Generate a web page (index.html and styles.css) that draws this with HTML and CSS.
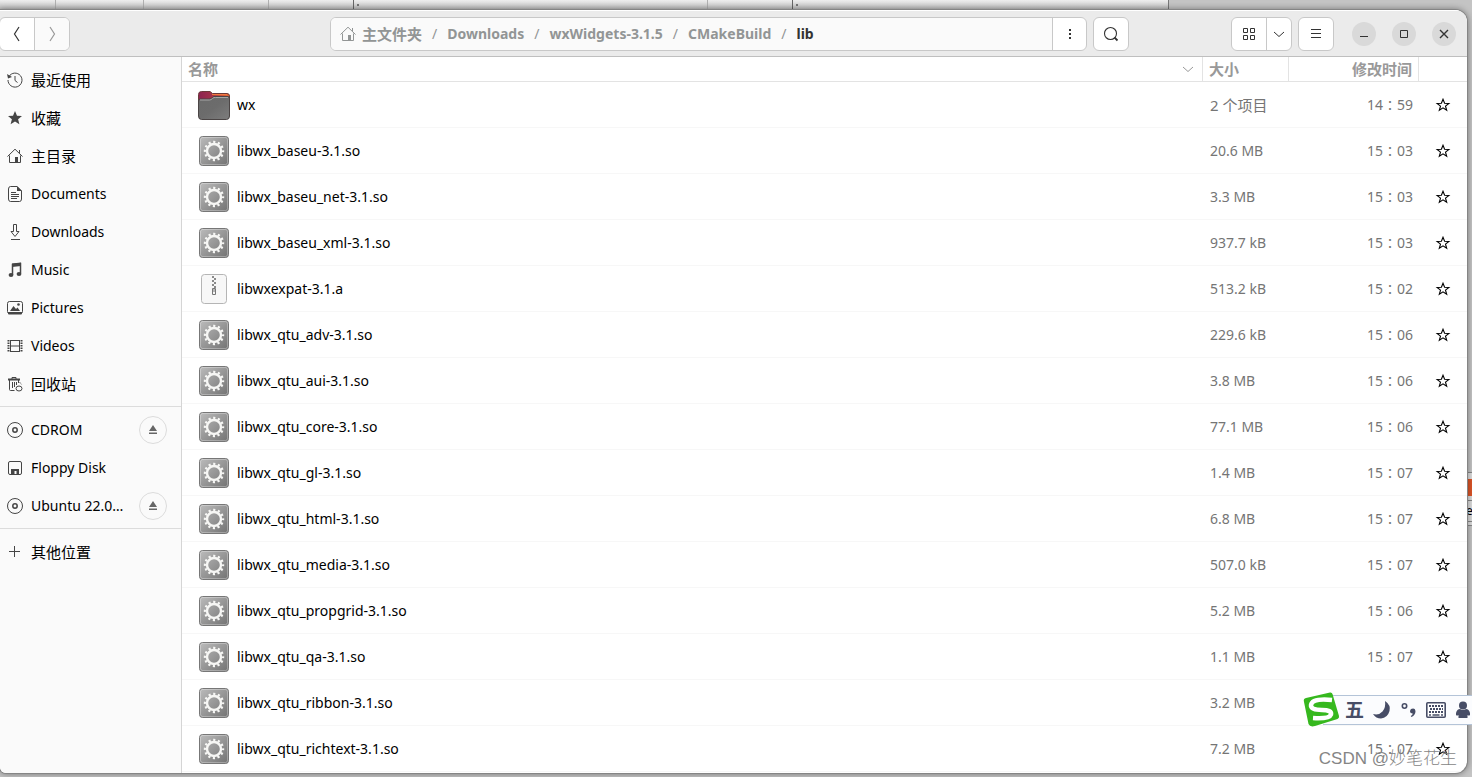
FILE: index.html
```
<!DOCTYPE html>
<html lang="zh-CN">
<head>
    <meta charset="UTF-8">
    <meta name="viewport" content="width=device-width, initial-scale=1.0">
    <title>lib</title>
    <link rel="stylesheet" href="styles.css">
</head>
<body>
    <svg class="sprite" aria-hidden="true">
        <defs>
            <linearGradient id="metal" x1="0" y1="0" x2="1" y2="1">
                <stop offset="0" stop-color="#bcbcbc"/>
                <stop offset="1" stop-color="#727272"/>
            </linearGradient>
            <linearGradient id="folderBack" x1="0" y1="0" x2="1" y2="0">
                <stop offset="0" stop-color="#8c2350"/>
                <stop offset="0.4" stop-color="#a0304a"/>
                <stop offset="1" stop-color="#ea6a31"/>
            </linearGradient>
            <linearGradient id="folderFront" x1="0" y1="0" x2="1" y2="1">
                <stop offset="0" stop-color="#6a6a6a"/>
                <stop offset="0.5" stop-color="#6c6c6c"/>
                <stop offset="1" stop-color="#7d7d7d"/>
            </linearGradient>
        </defs>
        <symbol id="gear" viewBox="0 0 32 32">
            <rect x="1.5" y="1.5" width="29" height="29" rx="3" fill="url(#metal)" stroke="#777"/>
            <rect x="2.5" y="2.5" width="27" height="27" rx="2" fill="none" stroke="#fff" stroke-opacity="0.3"/>
            <circle cx="16" cy="16" r="7" fill="none" stroke="#f6f6f4" stroke-width="2.4"/>
            <circle cx="16" cy="16" r="9" fill="none" stroke="#f6f6f4" stroke-width="2.4" stroke-dasharray="2.2 2.512" stroke-dashoffset="1.1"/>
        </symbol>
        <symbol id="folder" viewBox="0 0 32 32">
            <path d="M.5 26V5.500Q.5 2.500 3.500 2.500H12l2.500 2H29q2.500 0 2.500 2.500v20z" fill="url(#folderBack)" stroke="#6b3a3a"/>
            <path d="M14 5.500h15" stroke="#f07a40"/>
            <path d="M.5 12q0-2 2-2H11q2 0 3.500-1.500T17 7.500h13q1.500 0 1.500 2V27q0 3.500-3 3.500H3.500Q.5 30.500.5 27z" fill="url(#folderFront)" stroke="#4b4545"/>
            <path d="M2 11h9.500q1.500 0 3-1.500t3-1H30" fill="none" stroke="#a5a5a5"/>
        </symbol>
        <symbol id="archive" viewBox="0 0 32 32">
            <rect x="3.500" y="1.500" width="25" height="29" rx="3" fill="#f7f7f7" stroke="#b5b5b5"/>
            <path d="M14 3h2v2h-2zM16 5h2v2h-2zM14 7h2v2h-2zM16 9h2v2h-2zM14 11h2v2h-2zM16 13h2v2h-2z" fill="#8a8a8a"/>
            <path d="M14.500 15.500h3v6h-3zM16 16v3" fill="none" stroke="#777"/>
        </symbol>
        <symbol id="star" viewBox="0 0 16 16">
            <path d="M8 2.200l1.600 4 4.300.2-3.400 2.700 1.200 4.200L8 10.900l-3.700 2.400 1.200-4.200L2.100 6.400l4.300-.2z" fill="none" stroke="#000" stroke-width="1.100"/>
        </symbol>
        <symbol id="star-full" viewBox="0 0 16 16">
            <path d="M8 1l2 4.800 5 .3-3.900 3.200 1.300 5L8 11.500l-4.400 2.800 1.300-5L1 6.100l5-.3z" fill="#454545"/>
        </symbol>
        <symbol id="recent" viewBox="0 0 16 16">
            <path d="M2 4.500A7 7 0 1 1 1 8M8 4v4.500l2.500 2" fill="none" stroke="currentColor"/>
            <path d="M0 2l1 4.500L5 5z" fill="currentColor"/>
        </symbol>
        <symbol id="home" viewBox="0 0 16 16">
            <path d="M.5 8.500L8 1.200l7.500 7.300M2.500 7.500v7h11v-7M12.500 2v3" fill="none" stroke="currentColor"/>
            <path d="M8 9h3v5.500H8z" fill="currentColor"/>
        </symbol>
        <symbol id="document" viewBox="0 0 16 16">
            <path d="M1.500 3q0-2.500 2-2.500H10L14.500 5v8q0 2.500-2 2.500h-9q-2 0-2-2.500zM4 6.500h5M4 8.500h8M4 10.500h8M4 12.500h6" fill="none" stroke="currentColor"/>
            <path d="M10 0v5h5z" fill="currentColor"/>
        </symbol>
        <symbol id="download" viewBox="0 0 16 16">
            <path d="M6.500.5h3v7H12l-4 5-4-5h2.500zM4 15.500h9" fill="none" stroke="currentColor"/>
        </symbol>
        <symbol id="music" viewBox="0 0 16 16">
            <path d="M5.500 13V2.500L13.500 1.500V11.500" fill="none" stroke="currentColor" stroke-width="1.500"/>
            <path d="M5 1.500L14 .5V4L5 5z" fill="currentColor"/>
            <ellipse cx="4" cy="13" rx="2.400" ry="2" fill="currentColor"/>
            <ellipse cx="12" cy="12" rx="2.400" ry="2" fill="currentColor"/>
        </symbol>
        <symbol id="picture" viewBox="0 0 16 16">
            <rect x=".5" y="1.500" width="15" height="12" rx="2" fill="none" stroke="currentColor"/>
            <path d="M1 12h14v1.500q0 1-1 1H2q-1 0-1-1zM3 11l3.500-5L9 9l1.500-1.500L13 11z" fill="currentColor"/>
            <circle cx="11.500" cy="4.500" r="1.300" fill="currentColor"/>
        </symbol>
        <symbol id="video" viewBox="0 0 16 16">
            <path d="M3.500 2v12M12.500 2v12M3.500 2.500h9M3.500 8h9M3.500 13.500h9" fill="none" stroke="currentColor"/>
            <path d="M1.500 2v12.500M14.500 2v12.500" fill="none" stroke="currentColor" stroke-width="2" stroke-dasharray="1.500 1"/>
        </symbol>
        <symbol id="trash" viewBox="0 0 16 16">
            <path d="M5 3V1.500h4V3M2.500 4v9.500q0 1 1 1h4M11.500 4v3M5.500 6v6M7.500 6v5M9.500 6v3" fill="none" stroke="currentColor"/>
            <path d="M1 2.500h12v2H1z" fill="currentColor"/>
            <path d="M12.500 6l2.500 3" fill="none" stroke="currentColor" stroke-dasharray="1 1"/>
            <ellipse cx="12" cy="12.500" rx="3" ry="2.500" fill="#fafafa" stroke="currentColor"/>
        </symbol>
        <symbol id="disc" viewBox="0 0 16 16">
            <circle cx="8" cy="8" r="7.500" fill="none" stroke="currentColor"/>
            <circle cx="8" cy="8" r="2.200" fill="none" stroke="currentColor" stroke-width="1.500"/>
        </symbol>
        <symbol id="floppy" viewBox="0 0 16 16">
            <rect x="1.500" y="1.500" width="13" height="13" rx="1.500" fill="none" stroke="currentColor"/>
            <path d="M4 9h8v6H9.500v-4h-2v4H4z" fill="currentColor"/>
        </symbol>
        <symbol id="plus" viewBox="0 0 16 16">
            <path d="M2 7.500h11M7.500 2v11" fill="none" stroke="currentColor"/>
        </symbol>
        <symbol id="eject" viewBox="0 0 16 16">
            <path d="M8 3l4 6H4zM4 10.500h8V12H4z" fill="#666"/>
        </symbol>
        <symbol id="down" viewBox="0 0 16 16">
            <path d="M3 6l5 4.500L13 6" fill="none" stroke="currentColor"/>
        </symbol>
    </svg>

    <div class="desktop" aria-hidden="true">
        <div class="behind-bar">
            <i></i><i></i><i></i><i class="edge"></i><i></i><i class="edge"></i>
        </div>
        <div class="behind-side"><b></b><span>e</span></div>
    </div>

    <div class="window">
        <header class="toolbar">
            <div class="group nav">
                <button aria-label="后退"><svg width="16" height="16" viewBox="0 0 16 16"><path d="M10 1L5.500 8 10 15" fill="none" stroke="currentColor" stroke-width="1.200"/></svg></button>
                <button aria-label="前进" disabled><svg width="16" height="16" viewBox="0 0 16 16"><path d="M6 1l4.500 7L6 15" fill="none" stroke="currentColor" stroke-width="1.200"/></svg></button>
            </div>
            <div class="group path">
                <nav class="crumbs">
                    <svg class="icon"><use href="#home"/></svg>
                    <a href="#" class="zh">主文件夹</a><span>/</span>
                    <a href="#">Downloads</a><span>/</span>
                    <a href="#">wxWidgets-3.1.5</a><span>/</span>
                    <a href="#">CMakeBuild</a><span>/</span>
                    <a href="#" class="current">lib</a>
                </nav>
                <button aria-label="菜单"><svg width="16" height="16" viewBox="0 0 16 16"><path d="M7 3h2v2H7zM7 7h2v2H7zM7 11h2v2H7z" fill="currentColor"/></svg></button>
            </div>
            <div class="group">
                <button aria-label="搜索"><svg width="16" height="16" viewBox="0 0 16 16"><circle cx="7.500" cy="7.500" r="6" fill="none" stroke="currentColor" stroke-width="1.100"/><path d="M11.500 11.500l3 3" stroke="currentColor" stroke-width="1.800"/></svg></button>
            </div>
            <div class="group view">
                <button aria-label="图标视图"><svg width="16" height="16" viewBox="0 0 16 16"><path d="M2.500 2.500h4v4h-4zM9.500 2.500h4v4h-4zM2.500 9.500h4v4h-4zM9.500 9.500h4v4h-4z" fill="none" stroke="currentColor"/></svg></button>
                <button class="narrow" aria-label="视图选项"><svg class="icon"><use href="#down"/></svg></button>
            </div>
            <div class="group">
                <button aria-label="主菜单"><svg width="16" height="16" viewBox="0 0 16 16"><path d="M3 3.500h10M3 7.500h10M3 11.500h10" stroke="currentColor"/></svg></button>
            </div>
            <div class="controls">
                <button aria-label="最小化"><svg width="16" height="16" viewBox="0 0 16 16"><path d="M4 10.500h8" stroke="currentColor"/></svg></button>
                <button aria-label="最大化"><svg width="16" height="16" viewBox="0 0 16 16"><path d="M4.500 4.500h7v7h-7z" fill="none" stroke="currentColor"/></svg></button>
                <button aria-label="关闭"><svg width="16" height="16" viewBox="0 0 16 16"><path d="M4 4l8 8M12 4l-8 8" stroke="currentColor" stroke-width="1.400"/></svg></button>
            </div>
        </header>

        <div class="main">
            <aside class="sidebar">
                <ul>
                    <li><a href="#" class="zh"><svg class="icon"><use href="#recent"/></svg>最近使用</a></li>
                    <li><a href="#" class="zh"><svg class="icon"><use href="#star-full"/></svg>收藏</a></li>
                    <li><a href="#" class="zh"><svg class="icon"><use href="#home"/></svg>主目录</a></li>
                    <li><a href="#"><svg class="icon"><use href="#document"/></svg>Documents</a></li>
                    <li><a href="#"><svg class="icon"><use href="#download"/></svg>Downloads</a></li>
                    <li><a href="#"><svg class="icon"><use href="#music"/></svg>Music</a></li>
                    <li><a href="#"><svg class="icon"><use href="#picture"/></svg>Pictures</a></li>
                    <li><a href="#"><svg class="icon"><use href="#video"/></svg>Videos</a></li>
                    <li><a href="#" class="zh"><svg class="icon"><use href="#trash"/></svg>回收站</a></li>
                </ul>
                <ul>
                    <li><a href="#"><svg class="icon"><use href="#disc"/></svg>CDROM</a><button class="eject" aria-label="弹出"><svg class="icon"><use href="#eject"/></svg></button></li>
                    <li><a href="#"><svg class="icon"><use href="#floppy"/></svg>Floppy Disk</a></li>
                    <li><a href="#"><svg class="icon"><use href="#disc"/></svg>Ubuntu 22.0…</a><button class="eject" aria-label="弹出"><svg class="icon"><use href="#eject"/></svg></button></li>
                </ul>
                <ul>
                    <li><a href="#" class="zh"><svg class="icon"><use href="#plus"/></svg>其他位置</a></li>
                </ul>
            </aside>

            <table class="files">
                <thead>
                    <tr>
                        <th class="name"><div>名称<svg class="icon"><use href="#down"/></svg></div></th>
                        <th class="size">大小</th>
                        <th class="time">修改时间</th>
                        <th class="fav"></th>
                    </tr>
                </thead>
                <tbody>
                    <tr><td><div><svg class="mime"><use href="#folder"/></svg>wx</div></td><td class="zh">2 个项目</td><td>14∶59</td><td><svg class="icon"><use href="#star"/></svg></td></tr>
                    <tr><td><div><svg class="mime"><use href="#gear"/></svg>libwx_baseu-3.1.so</div></td><td>20.6 MB</td><td>15∶03</td><td><svg class="icon"><use href="#star"/></svg></td></tr>
                    <tr><td><div><svg class="mime"><use href="#gear"/></svg>libwx_baseu_net-3.1.so</div></td><td>3.3 MB</td><td>15∶03</td><td><svg class="icon"><use href="#star"/></svg></td></tr>
                    <tr><td><div><svg class="mime"><use href="#gear"/></svg>libwx_baseu_xml-3.1.so</div></td><td>937.7 kB</td><td>15∶03</td><td><svg class="icon"><use href="#star"/></svg></td></tr>
                    <tr><td><div><svg class="mime"><use href="#archive"/></svg>libwxexpat-3.1.a</div></td><td>513.2 kB</td><td>15∶02</td><td><svg class="icon"><use href="#star"/></svg></td></tr>
                    <tr><td><div><svg class="mime"><use href="#gear"/></svg>libwx_qtu_adv-3.1.so</div></td><td>229.6 kB</td><td>15∶06</td><td><svg class="icon"><use href="#star"/></svg></td></tr>
                    <tr><td><div><svg class="mime"><use href="#gear"/></svg>libwx_qtu_aui-3.1.so</div></td><td>3.8 MB</td><td>15∶06</td><td><svg class="icon"><use href="#star"/></svg></td></tr>
                    <tr><td><div><svg class="mime"><use href="#gear"/></svg>libwx_qtu_core-3.1.so</div></td><td>77.1 MB</td><td>15∶06</td><td><svg class="icon"><use href="#star"/></svg></td></tr>
                    <tr><td><div><svg class="mime"><use href="#gear"/></svg>libwx_qtu_gl-3.1.so</div></td><td>1.4 MB</td><td>15∶07</td><td><svg class="icon"><use href="#star"/></svg></td></tr>
                    <tr><td><div><svg class="mime"><use href="#gear"/></svg>libwx_qtu_html-3.1.so</div></td><td>6.8 MB</td><td>15∶07</td><td><svg class="icon"><use href="#star"/></svg></td></tr>
                    <tr><td><div><svg class="mime"><use href="#gear"/></svg>libwx_qtu_media-3.1.so</div></td><td>507.0 kB</td><td>15∶07</td><td><svg class="icon"><use href="#star"/></svg></td></tr>
                    <tr><td><div><svg class="mime"><use href="#gear"/></svg>libwx_qtu_propgrid-3.1.so</div></td><td>5.2 MB</td><td>15∶06</td><td><svg class="icon"><use href="#star"/></svg></td></tr>
                    <tr><td><div><svg class="mime"><use href="#gear"/></svg>libwx_qtu_qa-3.1.so</div></td><td>1.1 MB</td><td>15∶07</td><td><svg class="icon"><use href="#star"/></svg></td></tr>
                    <tr><td><div><svg class="mime"><use href="#gear"/></svg>libwx_qtu_ribbon-3.1.so</div></td><td>3.2 MB</td><td>15∶07</td><td><svg class="icon"><use href="#star"/></svg></td></tr>
                    <tr><td><div><svg class="mime"><use href="#gear"/></svg>libwx_qtu_richtext-3.1.so</div></td><td>7.2 MB</td><td>15∶07</td><td><svg class="icon"><use href="#star"/></svg></td></tr>
                </tbody>
            </table>
        </div>
    </div>

    <!-- input method bar, hangs off the right edge of the screen -->
    <div class="ime">
        <svg class="ime-logo" width="38" height="36" viewBox="0 0 38 36">
            <path d="M3 6L27 .5q2-.3 2.500 1.500L36 24q.5 2-1.500 3L12 34q-5 1.500-6.500-2L.8 9Q.5 6.500 3 6z" fill="#36b81e"/>
            <path d="M29 8Q9 6 8 13q-.5 5 11 5 10 0 9 4.500Q26.500 27 10 26" fill="none" stroke="#fff" stroke-width="4.500"/>
        </svg>
        <span class="ime-mode">五</span>
        <svg width="20" height="20" viewBox="0 0 20 20"><path d="M13 1q6 4 4.500 10Q15.500 18 9 18.500 4 18.500 1 14q6 1.500 9.500-2.500T13 1z" fill="#474d66"/></svg>
        <svg width="18" height="20" viewBox="0 0 18 20"><circle cx="4.500" cy="6" r="2.200" fill="none" stroke="#474d66" stroke-width="1.600"/><path d="M11 9q4-1.500 4.500 2 0 4-4 6l-.8-1q2-1 2-2.500-2.700 0-2.700-2 0-1.500 1-2.500z" fill="#474d66"/></svg>
        <svg width="20" height="16" viewBox="0 0 20 16"><rect x=".8" y=".8" width="18.400" height="14.400" rx="1" fill="#fff" stroke="#474d66" stroke-width="1.600"/><path d="M3 4h14M3 10h14" stroke="#474d66" stroke-width="2" stroke-dasharray="2 1"/><path d="M4 7h13" stroke="#474d66" stroke-width="2" stroke-dasharray="2 1"/><path d="M3 13h2M6.500 13h7M15 13h2" stroke="#474d66" stroke-width="1.500"/></svg>
        <svg width="18" height="20" viewBox="0 0 18 20"><circle cx="9" cy="5.500" r="4" fill="#474d66"/><path d="M2 13q1-4 4-4 3 2 6 0 3 0 4 4v2q-1 1-2.500 0V18h-9v-3Q3 16 2 15z" fill="#474d66"/></svg>
    </div>
    <div class="watermark">CSDN @妙笔花生</div>
</body>
</html>
```
FILE: styles.css
```
* {
    margin: 0;
    padding: 0;
    box-sizing: border-box;
}

body {
    font-family: 'Noto Sans', 'Noto Sans CJK SC', sans-serif;
    font-size: 14px;
    line-height: 20px;
    color: #000;
    background: #c4c4c4;
    height: 100vh;
    overflow: hidden;
    display: flex;
    flex-direction: column;
    padding: 10px 5px 4px 0;
}

a {
    color: inherit;
    text-decoration: none;
}

button {
    border: none;
    background: none;
    color: #333;
    display: flex;
    align-items: center;
    justify-content: center;
}

/* Chinese labels run a little larger than the Latin ones */
.zh {
    font-size: 15px;
}

.sprite {
    position: absolute;
    width: 0;
    height: 0;
}

.icon {
    width: 16px;
    height: 16px;
    flex: none;
}

/* what shows from under the window */
.desktop {
    position: absolute;
    inset: 0;
    overflow: hidden;
}

.behind-bar {
    display: grid;
    grid-template-columns: 56px 88px 125px 85px 354px 85px;
    width: 1169px;
    height: 10px;
    background: linear-gradient(#eee, #bbb);
    border-right: 1px solid #777;
}

.behind-bar i {
    border-right: 1px solid #b0b0b0;
}

.behind-bar .edge {
    border-right-color: #666;
    position: relative;
}

.behind-bar .edge::after {
    content: "";
    position: absolute;
    left: 100%;
    top: 4px;
    width: 2px;
    height: 6px;
    margin-left: 4px;
    border: solid #777;
    border-width: 2px 0;
}

.behind-side {
    position: absolute;
    right: 0;
    top: 472px;
    width: 6px;
    height: 54px;
    overflow: hidden;
    border: solid #888;
    border-width: 1px 0;
    background: #ddd;
}

.behind-side b {
    display: block;
    height: 17px;
    margin-top: 6px;
    background: #dd5528;
}

.behind-side span {
    display: block;
    margin-top: 4px;
    border: solid #888;
    border-width: 1px 0;
    font-size: 12px;
}

.window {
    position: relative;
    flex: 1;
    min-height: 0;
    display: flex;
    flex-direction: column;
    background: #fff;
    border-radius: 0 12px 12px 6px;
    box-shadow: 0 0 0 1px #858585, 0 0 6px 1px rgba(0, 0, 0, 0.4);
    overflow: hidden;
}

.toolbar {
    display: flex;
    align-items: center;
    gap: 6px;
    height: 47px;
    flex: none;
    padding-right: 11px;
    background: #ebebeb;
    border-top: 1px solid #fff;
    border-bottom: 1px solid #bfbfbf;
}

.group {
    display: flex;
    height: 34px;
    background: #fff;
    border: 1px solid #c8c8c8;
    border-radius: 6px;
    overflow: hidden;
    flex: none;
}

.group button {
    width: 34px;
}

.group > * + button {
    border-left: 1px solid #c8c8c8;
}

.group .narrow {
    width: 25px;
}

.nav {
    margin-left: -1px;
}

.nav button:disabled {
    width: 35px;
    background: #fafafa;
    color: #999;
}

.path {
    flex: 1;
    margin-left: 254px;
}

.crumbs {
    flex: 1;
    display: flex;
    align-items: center;
    gap: 10px;
    padding-left: 9px;
    background: #fafafa;
    color: #929595;
    font-weight: bold;
    white-space: nowrap;
}

.crumbs .icon {
    margin-right: -4px;
}

.crumbs span {
    font-weight: normal;
}

.crumbs .current {
    color: #333;
}

.view {
    margin-left: 96px;
}

.controls {
    display: flex;
    gap: 16px;
    margin-left: 12px;
}

.controls button {
    width: 24px;
    height: 24px;
    border-radius: 50%;
    background: #d9d9d9;
}

.main {
    flex: 1;
    display: flex;
    align-items: flex-start;
    min-height: 0;
}

.sidebar {
    width: 182px;
    flex: none;
    align-self: stretch;
    padding-top: 4px;
    background: #fafafa;
    border-right: 1px solid #d5d5d5;
}

.sidebar ul {
    list-style: none;
}

.sidebar ul + ul {
    border-top: 1px solid #dcdcdc;
    margin-top: 3px;
    padding-top: 4px;
}

.sidebar li {
    display: flex;
    align-items: center;
    justify-content: space-between;
    height: 38px;
    padding: 0 14px 0 7px;
}

.sidebar a {
    display: flex;
    align-items: center;
    gap: 8px;
    white-space: nowrap;
}

.sidebar .icon {
    color: #454545;
}

.eject {
    width: 28px;
    height: 28px;
    border: 1px solid #dcdcdc;
    border-radius: 50%;
}

.files {
    flex: 1;
    table-layout: fixed;
    border-collapse: separate;
    border-spacing: 0;
}

.files th {
    height: 25px;
    padding: 0 6px;
    border-right: 1px solid #e3e3e3;
    border-bottom: 1px solid #e3e3e3;
    color: #999;
    font-size: 15px;
    text-align: left;
}

.files th div {
    display: flex;
    align-items: center;
    justify-content: space-between;
}

.files .size {
    width: 86px;
}

.files .time {
    width: 130px;
    text-align: right;
}

.files .fav {
    width: 48px;
    border-right: none;
}

.files td {
    height: 46px;
    padding: 0 7px;
    border-bottom: 1px solid #f7f7f7;
    color: #757575;
}

.files td:first-child {
    padding-left: 16px;
    color: #000;
}

.files td:nth-child(3) {
    text-align: right;
    padding-right: 6px;
}

.files td:last-child {
    text-align: center;
    line-height: 0;
}

.files td div {
    display: flex;
    align-items: center;
    gap: 7px;
}

.mime {
    width: 32px;
    height: 32px;
}

.ime {
    position: absolute;
    left: calc(100% - 149px);
    top: 695px;
    display: flex;
    align-items: center;
    gap: 8px;
    width: 149px;
    height: 30px;
    background: #fbfcfe;
    border: 1px solid #b4c4d8;
    border-width: 1px 0;
    clip-path: inset(-10px 0 -10px -30px);
}

.ime svg {
    flex: none;
}

.ime .ime-logo {
    margin-left: -20px;
    margin-right: -4px;
}

.ime-mode {
    font-size: 19px;
    font-weight: bold;
    color: #474d66;
}

.watermark {
    position: absolute;
    right: 15px;
    bottom: 6px;
    font-size: 17px;
    line-height: 24px;
    font-weight: 300;
    color: #858585;
    font-family: 'Liberation Sans', 'Noto Sans CJK SC', sans-serif;
}
```
